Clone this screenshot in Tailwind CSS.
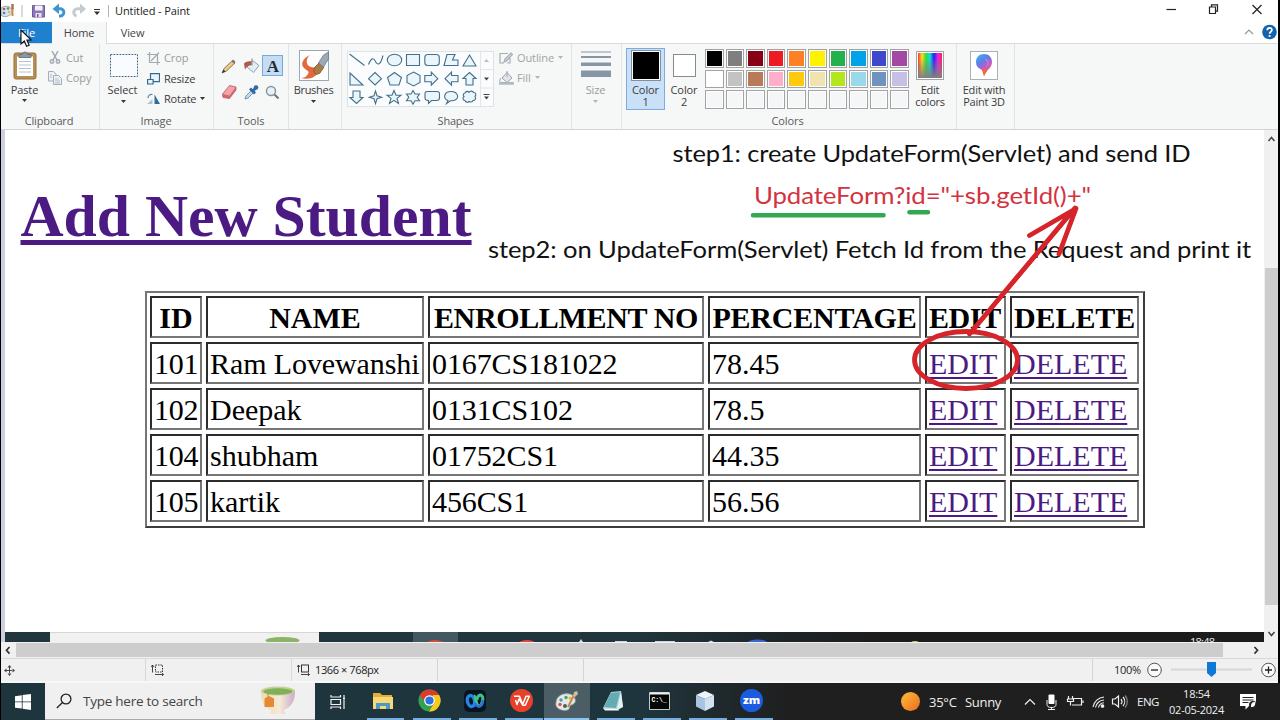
<!DOCTYPE html>
<html lang="en">
<head>
<meta charset="utf-8">
<title>Untitled - Paint</title>
<script src="https://cdn.jsdelivr.net/npm/@tailwindcss/browser@4"></script>
</head>
<body class="w-[1280px] h-[720px] overflow-hidden bg-black">
<div class="w-[1280px] h-[720px] flex flex-col overflow-hidden font-['Open_Sans','Noto_Sans',sans-serif] text-[11px] leading-3 tracking-[-0.1px] text-[#3c3c3c] whitespace-nowrap">

  <!-- window -->
  <div class="h-[683px] pl-px pr-[2px] flex flex-col bg-black">
    <!-- title bar -->
    <header class="h-[22px] bg-white flex items-center">
      <svg class="w-[114px] h-[22px] shrink-0" viewBox="1 0 114 22">
        <path d="M1 8c4-3 10-2 11 2s-2 5-4 6-5 1-7-1z" fill="#d5e3ea" stroke="#8397a1" stroke-width=".8"/>
        <circle cx="4" cy="9" r="1.3" fill="#c7524a"/><circle cx="8" cy="8.500" r="1.300" fill="#5b9c4e"/><circle cx="4" cy="13" r="1.300" fill="#4b7dc0"/><circle cx="9" cy="12" r="1.200" fill="#e5b84b"/>
        <path d="M12.500 16V8" stroke="#d28b49" stroke-width="2"/><path d="M12.500 9V4" stroke="#a9705a" stroke-width="2.500"/>
        <path d="M22 5v12M108.500 5v12" stroke="#b5b5b5"/>
        <path d="M32.500 5.500h12v11.500h-12z" fill="#8e76b8" stroke="#6e5a9a"/><path d="M35 5.500h7.500v5H35z" fill="#f5f1fa"/><path d="M35.500 13h6v4h-6z" fill="#e9e3f2"/><path d="M37 14h1.500v3H37z" fill="#6e5a9a"/>
        <path d="M56 8.800h4a3.600 3.600 0 0 1 .5 7.200h-1.500" fill="none" stroke="#3d95cf" stroke-width="2.900"/><path d="M52.500 9l6.500-5.500v10.500z" fill="#3d95cf"/>
        <path d="M82 8.800h-3.500a3.600 3.600 0 0 0-2 7.200" fill="none" stroke="#c3cbd1" stroke-width="2.900"/><path d="M86 9l-6-5.500v10.500z" fill="#c3cbd1"/>
        <path d="M94 9.500h6" stroke="#333"/><path d="M94 11.500h6l-3 3.500z" fill="#333"/>
      </svg>
      <h1 class="text-[#222]">Untitled - Paint</h1>
      <svg class="ml-auto w-[120px] h-[22px]" viewBox="1158 0 120 22" fill="none" stroke="#222" stroke-width="1.200">
        <path d="M1166.500 9.500h9.500"/><path d="M1209.500 7h6v6.500h-6zM1211.500 7V4.800h6v6.400h-2"/><path d="M1252.500 5l9 9M1261.500 5l-9 9"/>
      </svg>
    </header>

    <!-- ribbon tabs -->
    <nav class="h-[22px] bg-white flex border-b border-[#dadbdc] text-[#444]">
      <div class="relative w-[51px] h-[21px] bg-[#1f80d0] text-white flex items-center justify-center">File
        <svg class="absolute left-[18px] top-[7px] w-4 h-5 z-10" viewBox="0 0 16 20"><path d="M2 1v14l3.300-3 2.300 5.300 2.600-1.100-2.300-5.200h4.300z" fill="#fff" stroke="#111" stroke-width="1.100"/></svg>
      </div>
      <div class="w-[55px] h-[22px] bg-[#f6f7f7] border-r border-[#dadbdc] flex items-center justify-center pb-px">Home</div>
      <div class="w-[51px] flex items-center justify-center">View</div>
      <svg class="ml-auto w-[40px] h-[21px]" viewBox="1238 22 40 21"><path d="M1245 34l4-4 4 4" fill="none" stroke="#999" stroke-width="1.200"/><circle cx="1269.500" cy="32" r="7.300" fill="#1463ae"/><path d="M1267.300 30.300c0-3.300 4.700-3 4.600-.3 0 1.700-2.300 1.800-2.300 3.800" fill="none" stroke="#fff" stroke-width="1.700"/><circle cx="1269.600" cy="36" r="1.100" fill="#fff"/></svg>
    </nav>

    <!-- ribbon -->
    <section class="h-[86px] bg-[#f6f7f7] border-b border-[#d2d3d4] flex">
      <!-- Clipboard -->
      <div class="w-[99px] border-r border-[#e2e3e4] flex flex-col">
        <div class="h-[71px] flex">
          <div class="w-[47px] flex flex-col items-center pt-[5px]">
            <svg class="w-[26px] h-[32px]" viewBox="0 0 26 32"><rect x="2" y="4" width="22" height="26" rx="2" fill="#b98e55" stroke="#94703f"/><path d="M5 7.500h16V27H5z" fill="#fff"/><path d="M7 12.500h12M7 16h12M7 19.500h12M7 23h12" stroke="#b4c3d3"/><path d="M7 8.500V5.500h3.500a2.500 2.500 0 0 1 5 0H19v3z" fill="#8d98a3" stroke="#5c6873" stroke-width=".8"/></svg>
            <span class="mt-[3px]">Paste</span>
            <svg class="mt-[3px] w-[5px] h-[4px]" viewBox="0 0 5 4"><path d="M0 0h5L2.500 3z" fill="#333"/></svg>
          </div>
          <div class="flex flex-col gap-[7px] pt-[7px] text-[#9b9b9b]">
            <div class="flex items-center gap-[4px]"><svg class="w-[14px] h-[13px]" viewBox="0 0 14 13" fill="none" stroke="#a3a9b1" stroke-width="1.500"><path d="M4 0l5 9M10 0L5 9"/><circle cx="4" cy="10.500" r="1.700"/><circle cx="10" cy="10.500" r="1.700"/></svg>Cut</div>
            <div class="flex items-center gap-[4px]"><svg class="w-[14px] h-[14px]" viewBox="0 0 14 14" fill="#eef0f4" stroke="#a4adc0"><path d="M.5.500h5l2.500 2.500v7H.5z"/><path d="M5.500 4.500h5l3 3v6h-8z"/><path d="M7 8h3.500M7 10h5M7 12h5M2 4h2M2 6h2" stroke-width=".8"/></svg>Copy</div>
          </div>
        </div>
        <div class="text-center text-[#5a5a5a] pr-[2px] tracking-[-0.15px]">Clipboard</div>
      </div>
      <!-- Image -->
      <div class="w-[114px] border-r border-[#e2e3e4] flex flex-col">
        <div class="h-[71px] flex">
          <div class="w-[47px] flex flex-col items-center pt-[10px]">
            <svg class="w-[28px] h-[23px]" viewBox="0 0 28 23"><rect x=".5" y=".5" width="27" height="22" fill="#f8fcff" stroke="#42637e" stroke-dasharray="1.800 1.200"/></svg>
            <span class="mt-[7px] pr-[2px]">Select</span>
            <svg class="mt-[4px] w-[5px] h-[4px]" viewBox="0 0 5 4"><path d="M0 0h5L2.500 3z" fill="#333"/></svg>
          </div>
          <div class="flex flex-col gap-[8.500px] pt-[8px]">
            <div class="flex items-center gap-[4px] h-3 text-[#9b9b9b]"><svg class="w-[13px] h-[13px]" viewBox="0 0 13 13" fill="none" stroke="#a3a9b1" stroke-width="1.200"><path d="M2.500 0v10.500H13M0 2.500h10.500V13M4 9l8-8.500"/></svg>Crop</div>
            <div class="flex items-center gap-[4px] h-3 tracking-[-0.2px]"><svg class="w-[13px] h-[12px]" viewBox="0 0 13 12" fill="#e9f3fa" stroke="#356b91" stroke-width="1.200"><path d="M3.500.600h9v8h-9z"/><path d="M.6 6.500h5.500v4.500H.6z"/></svg>Resize</div>
            <div class="flex items-center gap-[4px] h-3 tracking-[-0.2px]"><svg class="w-[13px] h-[12px]" viewBox="0 0 13 12"><path d="M7.500 1.500v9.500H13z" fill="#2f6e9a"/><path d="M5.500 6v5H0z" fill="#a9c7da"/><path d="M1 5c0-2.500 2-4 4.500-3.500" fill="none" stroke="#4c86ad" stroke-width="1.200"/></svg>Rotate<svg class="w-[5px] h-[4px]" viewBox="0 0 5 4"><path d="M0 0h5L2.500 3z" fill="#333"/></svg></div>
          </div>
        </div>
        <div class="text-center text-[#5a5a5a] pr-px">Image</div>
      </div>
      <!-- Tools -->
      <div class="w-[75px] border-r border-[#e2e3e4] flex flex-col">
        <svg class="w-[74px] h-[71px]" viewBox="214 44 74 71">
          <path d="M222 73l2-4.500 8.500-8 2.500 2.500-8.500 8z" fill="#e9c98a" stroke="#7d6238" stroke-width=".8"/><path d="M222 73l1.500-3.500 2 2z" fill="#333"/><path d="M231.500 61.500l1.500-2 2.500 2.300-1.500 2z" fill="#8b6f77"/>
          <path d="M247 67l5.500-6.500 6.500 5-5.500 7z" fill="#e4eef6" stroke="#8599a8" stroke-width=".9"/><path d="M252 58.500v7" stroke="#72889a"/><path d="M251.500 61.500c-3-1-6.500.5-7.500 2l1 6.500c1-2.500 2-4 6.500-5z" fill="#b3574a"/>
          <rect x="262.500" y="55.500" width="20" height="20" fill="#c5ddf3" stroke="#79a9d9"/>
          <text x="272.800" y="71.500" text-anchor="middle" font-family="Liberation Serif, serif" font-weight="700" font-size="17" fill="#1f2d3a">A</text>
          <path d="M222.500 94l7-8.500 6.500 1.500v3l-6.500 8.500-6.500-1z" fill="#d9636e" stroke="#b3525c" stroke-width=".7"/><path d="M223 94l6.500-8 6 1.500-6 8z" fill="#f0a5a9"/>
          <path d="M245 99l1-3 6-6 2 2-6 6z" fill="#c5dff2" stroke="#5a7b98" stroke-width=".8"/><path d="M250 88.500l5 5M252.500 91.500l4-4.500" stroke="#2c6ba6" stroke-width="2.800"/><circle cx="256" cy="87.500" r="2.300" fill="#2c6ba6"/>
          <circle cx="271" cy="91" r="4.500" fill="#e6f2fa" stroke="#8a9298" stroke-width="1.400"/><path d="M274.500 94.500l4 4" stroke="#757575" stroke-width="2.200"/>
        </svg>
        <div class="text-center text-[#5a5a5a]">Tools</div>
      </div>
      <!-- Brushes -->
      <div class="w-[53px] border-r border-[#e2e3e4] flex flex-col items-center pt-[6px] pr-[3px]">
        <svg class="w-[30px] h-[31px]" viewBox="0 0 30 31"><rect x=".5" y=".5" width="29" height="30" fill="#fff" stroke="#9aa9b5"/><path d="M11 5C4 8 1 14 5 18c3 3 6 3 4 6-2 3-4 4-7 4 7 2 16 0 17-7 0-4-4-3-7-4-5-1-6-8-1-12z" fill="#e2673a"/><path d="M15 18l5-5 5 4-4 6c-4 3-7 0-6-5z" fill="#a87b47" stroke="#7c5630" stroke-width=".8"/><path d="M19.500 13l5-8 5-3v7l-5 8z" fill="#9caab5" stroke="#6d7c88" stroke-width=".8"/></svg>
        <span class="mt-[3px] tracking-[-0.3px]">Brushes</span>
        <svg class="mt-[4px] w-[5px] h-[4px]" viewBox="0 0 5 4"><path d="M0 0h5L2.500 3z" fill="#333"/></svg>
      </div>
      <!-- Shapes -->
      <div class="w-[230px] border-r border-[#e2e3e4] flex flex-col">
        <div class="h-[71px] flex pl-[5px] pt-[7px]">
          <svg class="w-[147px] h-[56px]" viewBox="347 51 147 56" fill="none" stroke="#44708a" stroke-width="1.100">
            <path d="M347.500 51.500h146v55h-146z" fill="#fbfcfd" stroke="#dde3e8"/><path d="M480.500 52v54M481 69.500h12M481 88h12" stroke="#e2e7eb"/>
            <path d="M349.500 54l15 11.500"/><path d="M368.500 64.500c3-7 5-7 7-3s5 4 7.500-6"/><ellipse cx="394.500" cy="60" rx="7.200" ry="5.800" fill="#eaf6fb"/><path d="M406.500 54.500h13v11h-13z" fill="#eaf6fb"/><rect x="424.800" y="54.500" width="14.500" height="11" rx="3" fill="#eaf6fb"/><path d="M447 54.500h8l-2.500 5.500h5.500v5.500h-14z" fill="#eaf6fb"/><path d="M469.500 55l6.500 11h-13z" fill="#eaf6fb"/>
            <path d="M350 73v12h13z" fill="#eaf6fb"/><path d="M375 72.500l6.500 6.200-6.500 6.200-6.500-6.200z" fill="#eaf6fb"/><path d="M394.500 72.500l7 5-2.500 7.500h-9l-2.500-7.500z" fill="#eaf6fb"/><path d="M413.500 72l6.500 3.500v7l-6.500 3.500-6.500-3.500v-7z" fill="#eaf6fb"/><path d="M424.800 75.500h6.500v-3.500l6.500 6.700-6.500 6.500v-3.500h-6.500z" fill="#eaf6fb"/><path d="M458 75.500h-6.500v-3.500l-6.500 6.700 6.500 6.500v-3.500h6.500z" fill="#eaf6fb"/><path d="M469.500 72.500l6.500 6h-3v6.500h-7v-6.500h-3z" fill="#eaf6fb"/>
            <path d="M353 91h7v6.500h3l-6.500 6-6.500-6h3z" fill="#eaf6fb"/><path d="M375.500 91l1.500 4.800 4.700 1.500-4.700 1.500-1.500 4.800-1.500-4.800-4.700-1.500 4.700-1.500z" fill="#eaf6fb"/><path d="M394 90.500l2 4.700h5l-4 3.200 1.500 5-4.500-3-4.500 3 1.500-5-4-3.200h5z" fill="#eaf6fb"/><path d="M413 90.500l2 3.500h4.500l-2.300 3.300 2.300 3.400H415l-2 3.500-2-3.500h-4.500l2.300-3.400-2.300-3.300h4.500z" fill="#eaf6fb"/><path d="M427.500 91.500h9c3 0 3 1 3 3v3.500c0 2-1 2.500-3 2.500h-5l-3 3v-3c-2.500 0-3.500-.5-3.500-2.500v-3.500c0-2 0-3 2.500-3z" fill="#eaf6fb"/><path d="M448 100.500c-5.500-2-4-9 3-9s9.500 7.500 2.500 9c-1 .3-2.500.3-3 .3l-4 2.700z" fill="#eaf6fb"/><path d="M465 93c1-2 3-2 4-.7 1-1.800 4-1.500 4.500.2 2.500 0 3 2.500 1.500 4 1.500 2 0 4-2 4-1 2-3 1.500-4 1-1.500 1.500-3.500.5-4-1-2.500 0-2.500-3-1-4-1.500-1.500-.5-3.500 1-3.500z" fill="#eaf6fb"/>
            <g stroke="none" fill="#444"><path d="M484 62h5l-2.500-3z" fill="#bbb"/><path d="M484 77.500h5l-2.500 3zM483.500 94h6v1h-6zM484 96.500h5l-2.500 3z"/></g>
          </svg>
          <div class="ml-[5px] pt-px flex flex-col gap-[8px] text-[#a2a2a2]">
            <div class="flex items-center gap-[4px] h-3"><svg class="w-[14px] h-[12px]" viewBox="0 0 14 12" fill="none" stroke="#a6adb5" stroke-width="1.200"><path d="M9 1.500H1v9.500h4M11 6v5H8"/><path d="M5 10l1-3L12 1l1.500 1.500-6 6.500z" fill="#d4d8dc"/></svg>Outline<svg class="w-[5px] h-[4px]" viewBox="0 0 5 4"><path d="M0 0h5L2.500 3z" fill="#b5b5b5"/></svg></div>
            <div class="flex items-center gap-[3px] h-3"><svg class="w-[15px] h-[14px]" viewBox="0 0 15 14" fill="#e1e4e9" stroke="#9da5b1"><path d="M3 7l5-5.500 5 5.500-5 4.500z"/><path d="M8 0v6" fill="none"/><path d="M2 7c-2 3-1.500 4 0 4.500h12" fill="none"/><path d="M0 12.500h15" stroke="#b3bac7" stroke-width="2.500"/></svg>Fill<svg class="ml-px w-[5px] h-[4px]" viewBox="0 0 5 4"><path d="M0 0h5L2.500 3z" fill="#b5b5b5"/></svg></div>
          </div>
        </div>
        <div class="text-center text-[#5a5a5a] pr-[2px] tracking-[-0.2px]">Shapes</div>
      </div>
      <!-- Size -->
      <div class="w-[50px] border-r border-[#e2e3e4] flex flex-col items-center pt-[7px] pr-[2px] text-[#9b9b9b]">
        <svg class="w-[30px] h-[27px]" viewBox="0 0 30 27" fill="#8796a7"><path d="M0 .5h30v1H0zM0 5h30v2H0zM0 11.500h30V15H0zM0 19.500h30V26H0z"/></svg>
        <span class="mt-[6px]">Size</span>
        <svg class="mt-[4px] w-[5px] h-[4px]" viewBox="0 0 5 4"><path d="M0 0h5L2.500 3z" fill="#b5b5b5"/></svg>
      </div>
      <!-- Colors -->
      <div class="w-[335px] border-r border-[#e2e3e4] flex flex-col">
        <div class="h-[71px] flex pl-[4px] pt-[4px] text-center">
          <div class="w-[39px] h-[62px] bg-[#c9e0f7] border border-[#79acdf] flex flex-col items-center pt-px">
            <div class="w-[30px] h-[31px] border border-[#7f8fa0] p-px bg-white"><div class="h-full bg-black"></div></div>
            <span class="mt-[3px]">Color<br>1</span>
          </div>
          <div class="w-[38px] flex flex-col items-center pt-[6px]">
            <div class="w-[23px] h-[23px] border border-[#8a8a8a] bg-white"></div>
            <span class="mt-[7px]">Color<br>2</span>
          </div>
          <div class="ml-[2px] mt-px w-[204px] h-[60px] grid grid-cols-10 grid-rows-3 gap-[2px] *:border *:border-[#a3a3a3] *:p-px *:bg-[#fdfdfd]">
            <i><b class="block h-full bg-black"></b></i><i><b class="block h-full bg-[#7f7f7f]"></b></i><i><b class="block h-full bg-[#880015]"></b></i><i><b class="block h-full bg-[#ed1c24]"></b></i><i><b class="block h-full bg-[#ff7f27]"></b></i><i><b class="block h-full bg-[#fff200]"></b></i><i><b class="block h-full bg-[#22b14c]"></b></i><i><b class="block h-full bg-[#00a2e8]"></b></i><i><b class="block h-full bg-[#3f48cc]"></b></i><i><b class="block h-full bg-[#a349a4]"></b></i>
            <i><b class="block h-full bg-white"></b></i><i><b class="block h-full bg-[#c3c3c3]"></b></i><i><b class="block h-full bg-[#b97a57]"></b></i><i><b class="block h-full bg-[#ffaec9]"></b></i><i><b class="block h-full bg-[#ffc90e]"></b></i><i><b class="block h-full bg-[#efe4b0]"></b></i><i><b class="block h-full bg-[#b5e61d]"></b></i><i><b class="block h-full bg-[#99d9ea]"></b></i><i><b class="block h-full bg-[#7092be]"></b></i><i><b class="block h-full bg-[#c8bfe7]"></b></i>
            <i><b class="block h-full bg-[#f5f6f7]"></b></i><i><b class="block h-full bg-[#f5f6f7]"></b></i><i><b class="block h-full bg-[#f5f6f7]"></b></i><i><b class="block h-full bg-[#f5f6f7]"></b></i><i><b class="block h-full bg-[#f5f6f7]"></b></i><i><b class="block h-full bg-[#f5f6f7]"></b></i><i><b class="block h-full bg-[#f5f6f7]"></b></i><i><b class="block h-full bg-[#f5f6f7]"></b></i><i><b class="block h-full bg-[#f5f6f7]"></b></i><i><b class="block h-full bg-[#f5f6f7]"></b></i>
          </div>
          <div class="ml-px w-[40px] flex flex-col items-center pt-[3px]">
            <div class="w-[28px] h-[29px] border border-[#a3a3a3] p-px bg-white"><div class="h-full bg-[linear-gradient(to_bottom,transparent_20%,#808080),linear-gradient(to_right,#f33,#fd2,#3d3,#1dd,#22e,#e2e,#f24)]"></div></div>
            <span class="mt-[4px] tracking-[-0.25px]">Edit<br>colors</span>
          </div>
        </div>
        <div class="text-center text-[#5a5a5a] pr-[3px]">Colors</div>
      </div>
      <!-- Paint 3D -->
      <div class="w-[58px] border-r border-[#e2e3e4] flex flex-col items-center pt-[7px] pr-[3px] text-center">
        <svg class="w-[28px] h-[29px]" viewBox="0 0 28 29"><defs><linearGradient id="drop" x1="0" y1="0" x2=".6" y2="1"><stop offset="0" stop-color="#31c3ec"/><stop offset=".4" stop-color="#5b7fe8"/><stop offset=".7" stop-color="#c45ac8"/><stop offset="1" stop-color="#f0643c"/></linearGradient></defs><rect x=".5" y=".5" width="27" height="28" fill="#fff" stroke="#a9b1b8"/><path d="M14 3c5 0 8 3.500 8 8 0 6-5 7-8 14-1-3 0-5-3-6.500S6 15 6 11c0-4.500 3-8 8-8z" fill="url(#drop)"/><path d="M15 8c3 1 4 4 2 7" stroke="#b07fe0" stroke-width="1.500" fill="none"/><path d="M12 19l3-1.500 2 2-3 5.500z" fill="#f0673c"/></svg>
        <span class="mt-[4px] tracking-[-0.2px]">Edit with<br>Paint 3D</span>
      </div>
    </section>

    <!-- workspace -->
    <div class="h-[512px] flex bg-[#f0f0f0]">
      <main class="relative w-[1263px] h-[512px] pl-[4px] bg-[#cdcfdf] overflow-hidden">
        <div class="h-full bg-white flex flex-col font-['Liberation_Serif',serif] tracking-normal text-black">
          <a class="ml-[15.500px] mt-[52px] h-[68px] leading-[68px] text-[59.700px] font-bold text-[#4b1b83] underline decoration-[5px] underline-offset-[3.500px] self-start">Add New Student</a>
          <div class="ml-[140px] mt-[41px] w-[1000px] h-[237px] border-2 border-t-[#767676] border-l-[#767676] border-r-[#3c3c3c] border-b-[#3c3c3c] px-[3px] pt-[3px] grid grid-cols-[52px_218px_276px_213px_81px_129px] auto-rows-[42px] gap-x-[4px] gap-y-[4px] content-start text-[30px] leading-[39.500px] *:border-2 *:border-t-[#2c2c2c] *:border-l-[#2c2c2c] *:border-b-[#767676] *:border-r-[#767676] *:px-[2px] *:[&>a]:text-[#4b1b83] *:[&>a]:underline *:[&>a]:decoration-2 *:[&>a]:underline-offset-[3px]">
            <div class="font-bold text-center">ID</div><div class="font-bold text-center">NAME</div><div class="font-bold text-center tracking-[-0.35px]">ENROLLMENT NO</div><div class="font-bold text-center tracking-[-0.2px]">PERCENTAGE</div><div class="font-bold tracking-[-0.4px]">EDIT</div><div class="font-bold tracking-[-0.1px]">DELETE</div>
            <div class="tracking-[-0.3px] text-center">101</div><div class="tracking-[-0.1px]">Ram Lovewanshi</div><div class="tracking-[-0.1px]">0167CS181022</div><div>78.45</div><div><a>EDIT</a></div><div><a>DELETE</a></div>
            <div class="tracking-[-0.3px] text-center">102</div><div>Deepak</div><div class="tracking-[-0.1px]">0131CS102</div><div>78.5</div><div><a>EDIT</a></div><div><a>DELETE</a></div>
            <div class="tracking-[-0.3px] text-center">104</div><div>shubham</div><div class="tracking-[-0.1px]">01752CS1</div><div>44.35</div><div><a>EDIT</a></div><div><a>DELETE</a></div>
            <div class="tracking-[-0.3px] text-center">105</div><div>kartik</div><div class="tracking-[-0.1px]">456CS1</div><div>56.56</div><div><a>EDIT</a></div><div><a>DELETE</a></div>
          </div>
          <!-- clipped taskbar inside the drawing -->
          <svg class="mt-auto w-[1259px] h-[10px]" viewBox="5 632 1259 10">
            <defs><linearGradient id="strip"><stop offset=".5" stop-color="#20353c"/><stop offset=".62" stop-color="#1d2427"/><stop offset=".7" stop-color="#1c1c1c"/></linearGradient></defs>
            <path d="M5 632h1259v10H5z" fill="url(#strip)"/><path d="M50 632h269v10H50z" fill="#f1f1f1"/><path d="M50 632h269" stroke="#bbb"/><path d="M413 632h45v10h-45z" fill="#44585f"/>
            <ellipse cx="282.500" cy="640.500" rx="17" ry="3.500" fill="#8cb366"/><ellipse cx="435" cy="643" rx="8" ry="3" fill="#d34a40"/><ellipse cx="527" cy="643" rx="8" ry="3" fill="#e2483d"/><path d="M579 642l2-3 2 3zM615 641h12v1h-12zM655 641h20v1h-20zM708 642l3-1.500 3 1.500z" fill="#cfd6da"/><ellipse cx="757.500" cy="643" rx="10" ry="3.500" fill="#3d65cf"/><ellipse cx="915" cy="643" rx="4" ry="2" fill="#d8c860"/>
            <text x="1190" y="645.500" font-family="Open Sans, sans-serif" font-size="11" fill="#eee" textLength="25">18:48</text>
          </svg>
        </div>
        <!-- annotations drawn on the canvas -->
        <svg class="absolute inset-0 w-[1263px] h-[512px]" viewBox="1 130 1263 512" font-family="Lato, sans-serif" font-size="23.700">
          <text x="672.500" y="161.500" textLength="518" lengthAdjust="spacingAndGlyphs" fill="#111">step1: create UpdateForm(Servlet) and send ID</text>
          <text x="754" y="203.500" textLength="337" lengthAdjust="spacingAndGlyphs" fill="#d3333f">UpdateForm?id="+sb.getId()+"</text>
          <text x="488" y="258" textLength="763" lengthAdjust="spacingAndGlyphs" fill="#111">step2: on UpdateForm(Servlet) Fetch Id from the Request and print it</text>
          <path d="M753 215.200h130.500M909.500 212.300h18.500" stroke="#32a852" stroke-width="4.600" stroke-linecap="round"/>
          <g fill="none" stroke="#d6242b" stroke-width="4.800" stroke-linecap="round" stroke-linejoin="round"><path d="M969.500 334L1075 208M1029.500 235.500L1076 208.500 1059 254"/><path d="M972 332l104-124" stroke-width="3"/><ellipse cx="966" cy="360" rx="51.500" ry="28.500"/></g>
        </svg>
      </main>
      <div class="w-[14px] h-[512px] bg-[#f0f0f0] flex flex-col items-center">
        <svg class="w-[14px] h-[17px]" viewBox="0 0 14 17"><path d="M4.500 11l3-3.500 3 3.500" fill="none" stroke="#444" stroke-width="1.500"/></svg>
        <div class="mt-[121px] w-[13px] h-[337px] bg-[#cdcdcd]"></div>
        <svg class="mt-auto w-[14px] h-[17px]" viewBox="0 0 14 17"><path d="M4.500 7l3 3.500 3-3.500" fill="none" stroke="#444" stroke-width="1.500"/></svg>
      </div>
    </div>
    <!-- horizontal scrollbar -->
    <div class="h-[16px] bg-[#f0f0f0] flex items-center">
      <svg class="w-[15px] h-[16px]" viewBox="0 0 15 16"><path d="M8.500 5l-3 3.300 3 3.300" fill="none" stroke="#333" stroke-width="1.700"/></svg>
      <div class="w-[1207px] h-[14px] bg-[#cdcdcd]"></div>
      <svg class="ml-[26px] w-[15px] h-[16px]" viewBox="0 0 15 16"><path d="M5.500 5l3 3.300-3 3.300" fill="none" stroke="#333" stroke-width="1.700"/></svg>
    </div>
    <!-- status bar -->
    <footer class="h-[25px] bg-[#f0f0f0] border-t border-[#d9d9d9] flex items-center text-[#222] border-b-2 border-b-[#f7f7f7]">
      <div class="w-[145px] h-[22px] border-r border-[#d4d9de] flex items-center pl-[3px]"><svg class="w-[11px] h-[11px]" viewBox="0 0 11 11" fill="#444"><path d="M5 2h1v7H5zM2 5h7v1H2zM5.500 0l2 2.500h-4zM5.500 11l2-2.500h-4zM0 5.500l2.500-2v4zM11 5.500l-2.500-2v4z"/></svg></div>
      <div class="w-[146px] h-[22px] border-r border-[#d4d9de] flex items-center pl-[5px]"><svg class="w-[13px] h-[12px]" viewBox="0 0 13 12" fill="none" stroke="#333"><rect x="4.500" y="1" width="7" height="7" stroke-dasharray="1.500 1"/><path d="M1.500 8.500V1M0 3l1.500-2L3 3M4 10.500h8.500M11 9l1.500 1.500L11 12" stroke-width=".9"/></svg></div>
      <div class="w-[146px] h-[22px] border-r border-[#d4d4d4] flex items-center pl-[5px] gap-[5px] tracking-[-0.4px]"><svg class="w-[13px] h-[12px]" viewBox="0 0 13 12" fill="none" stroke="#333"><rect x="4.500" y="1" width="7" height="7"/><path d="M1.500 8.500V1M0 3l1.500-2L3 3M4 10.500h8.500M11 9l1.500 1.500L11 12" stroke-width=".9"/></svg>1366 × 768px</div>
      <div class="w-[146px] h-[22px] border-r border-[#d4d4d4]"></div>
      <div class="w-[509px] h-[22px] border-r border-[#d4d4d4]"></div>
      <span class="ml-[21px] w-[32px] tracking-[-0.3px]">100%</span>
      <svg class="w-[132px] h-[22px]" viewBox="1146 660 132 22" fill="none" stroke="#555"><circle cx="1154.500" cy="671" r="6.800" fill="#fafafa"/><path d="M1151 671h7" stroke="#222" stroke-width="1.300"/><path d="M1171 670.500h81" stroke="#d6d6d6" stroke-width="2"/><path d="M1207 663h9v11l-4.500 4-4.500-4z" fill="#0f78d4" stroke="none"/><circle cx="1268.500" cy="671" r="6.800" fill="#fafafa"/><path d="M1265 671h7M1268.500 667.500v7" stroke="#222" stroke-width="1.300"/></svg>
    </footer>
  </div>

  <!-- Windows taskbar -->
  <div class="h-[37px] flex items-stretch bg-[linear-gradient(to_right,#1f353d_0,#1f353d_640px,#1f1f1f_790px)] text-[#f0f0f0]">
    <div class="w-[45px] border-l border-black flex items-center justify-center"><svg class="w-[16px] h-[16px]" viewBox="0 0 16 16" fill="#fff"><path d="M0 2.200l6.800-1v6.300H0zM7.600 1.100L16 0v7.500H7.600zM0 8.300h6.800v6.300L0 13.700zM7.600 8.300H16V16l-8.400-1.200z"/></svg></div>
    <div class="w-[270px] bg-[#f0f0f0] border-b border-[#aaa] flex items-center pl-[11px] text-[13.500px] text-[#444]">
      <svg class="w-[16px] h-[16px]" viewBox="0 0 16 16" fill="none" stroke="#222" stroke-width="1.300"><circle cx="10" cy="6" r="4.900"/><path d="M6.500 9.500L.8 15"/></svg>
      <span class="ml-[11px] tracking-[-0.250px]">Type here to search</span>
      <svg class="ml-auto mr-[19px] w-[36px] h-[30px]" viewBox="0 0 36 30"><defs><linearGradient id="cup"><stop stop-color="#f1dcaf"/><stop offset=".55" stop-color="#f4ead7"/><stop offset="1" stop-color="#cfa9cf"/></linearGradient></defs><path d="M1 5c0 11 3 17 10 19 0 2-1 2-1 4h15c0-2-1-2-1-4 7-3 11-8 11-19z" fill="url(#cup)"/><ellipse cx="18" cy="5" rx="17" ry="4.500" fill="#c9cf9b"/><ellipse cx="18" cy="5.500" rx="14.500" ry="3.200" fill="#7fb257"/><path d="M8 7v5" stroke="#bc8349"/><path d="M9 10l5 2.500V21H4.500v-8.500z" fill="#e48a36"/></svg>
    </div>
    <div class="w-[45px] flex items-center justify-center"><svg class="w-[16px] h-[16px]" viewBox="0 0 16 16" fill="none" stroke="#f2f2f2" stroke-width="1.200"><path d="M1 1v2h9.500V1M1 15v-2h9.500v2M1 5.500h9.500v5H1zM14 1v2.500M14 6v9"/><path d="M13 4.500h2" stroke-width="2"/></svg></div>
    <div class="flex *:w-[46px] *:flex *:items-center *:justify-center *:border-b-2 *:border-transparent">
      <div class="relative"><svg class="w-[22px] h-[20px]" viewBox="0 0 22 20"><path d="M1 2h7l2 2h10v13H1z" fill="#e8ad35"/><path d="M1 6h20v12H1z" fill="#f8d775"/><path d="M4 18v-6h14v6h-4v-3H8v3z" fill="#4b9ac5"/></svg><i class="absolute left-[7px] bottom-[-2px] w-[37px] h-[2px] bg-[#76aee0]"></i></div>
      <div class="relative"><svg class="w-[23px] h-[23px]" viewBox="0 0 24 24"><circle cx="12" cy="12" r="11.500" fill="#31a350"/><path d="M2 6.200A11.500 11.500 0 0 1 22 6.300H12L8 15z" fill="#e1392c"/><path d="M22 6.300A11.500 11.500 0 0 1 11.500 23.500L17 14.500 15.500 6.300z" fill="#fbc81d"/><circle cx="12" cy="12" r="5.600" fill="#fff"/><circle cx="12" cy="12" r="4.300" fill="#2d72e0"/></svg><i class="absolute left-[7px] bottom-[-2px] w-[38px] h-[2px] bg-[#76aee0]"></i></div>
      <div class="relative"><svg class="w-[22px] h-[22px]" viewBox="0 0 22 22"><rect width="22" height="22" rx="5" fill="#0a1420"/><ellipse cx="7" cy="11" rx="3.600" ry="5.500" fill="none" stroke="#2486e3" stroke-width="3.500" transform="rotate(-12 7 11)"/><path d="M10 6c2 0 2 10 5 10s5-8 3-10-5 0-5 4" fill="none" stroke="#3cc38b" stroke-width="3"/><path d="M11 13c1 3 3 4 5 3s3-4 3-6" fill="none" stroke="#2a6fe0" stroke-width="2.500"/></svg><i class="absolute left-[7px] bottom-[-2px] w-[38px] h-[2px] bg-[#76aee0]"></i></div>
      <div class="relative"><svg class="w-[23px] h-[23px]" viewBox="0 0 23 23"><circle cx="11.500" cy="11.500" r="11.500" fill="#e8412a"/><path d="M4 7.200h5.500l3.200 8.300 3.300-8.300h3.300l-4 9h-2.500L9 10l-2 5.500h0L5.500 11" fill="none" stroke="#fff" stroke-width="1.500" stroke-linejoin="round"/></svg><i class="absolute left-[7px] bottom-[-2px] w-[38px] h-[2px] bg-[#76aee0]"></i></div>
      <div class="relative bg-[#4c5e65]"><svg class="w-[24px] h-[22px]" viewBox="0 0 24 22"><path d="M2 9c3-6 14-7 17-2s0 7-3 8 0 4-4 5-12-1-11-7z" fill="#e5e9e4" stroke="#aab9bc" stroke-width=".8"/><circle cx="6" cy="10" r="1.700" fill="#4f96c2"/><circle cx="11" cy="7.500" r="1.700" fill="#4aa457"/><circle cx="5" cy="14.500" r="1.700" fill="#d9513e"/><circle cx="15" cy="8" r="1.500" fill="#e0b33f"/><circle cx="10" cy="16" r="2" fill="#4c5e65"/><path d="M13 17l6-12" stroke="#c98842" stroke-width="2"/><path d="M18 6l1-4 3-1 1 3-3 3z" fill="#d8b79a"/></svg><i class="absolute left-0 bottom-[-2px] w-[45px] h-[2px] bg-[#8cc4f5]"></i></div>
      <div class="relative"><svg class="w-[22px] h-[22px]" viewBox="0 0 22 22"><path d="M9 2l10-1 2 16-5 3L1 18z" fill="#a9d7da"/><path d="M9 3l9-1-4 16-12-1z" fill="#64abb5"/><path d="M15 19l6-2-2-15z" fill="#e9eeee"/><path d="M1 18l15 1 1 1.500H3z" fill="#f7f7f7"/></svg><i class="absolute left-[7px] bottom-[-2px] w-[38px] h-[2px] bg-[#76aee0]"></i></div>
      <div class="relative"><svg class="w-[21px] h-[18px]" viewBox="0 0 21 18"><path d="M.5.500h20v17H.5z" fill="#060606" stroke="#c3cacc"/><path d="M1 1.500h19" stroke="#eee" stroke-width="2"/><text x="2.500" y="9.500" font-family="Liberation Mono, monospace" font-size="6.500" font-weight="700" fill="#fff">C:\_</text></svg><i class="absolute left-[7px] bottom-[-2px] w-[38px] h-[2px] bg-[#76aee0]"></i></div>
      <div class="relative"><svg class="w-[20px] h-[20px]" viewBox="0 0 20 20"><path d="M1 4l9-4 9 4-9 4z" fill="#edf4fb"/><path d="M1 4l9 4v12l-9-4.500z" fill="#a9c4e2"/><path d="M19 4l-9 4v12l9-4.500z" fill="#d3e1f0"/></svg><i class="absolute left-[7px] bottom-[-2px] w-[38px] h-[2px] bg-[#76aee0]"></i></div>
      <div class="relative"><svg class="w-[23px] h-[23px]" viewBox="0 0 23 23"><circle cx="11.500" cy="11.500" r="11.500" fill="#1c5be0"/><text x="11.500" y="15" text-anchor="middle" font-family="Open Sans, sans-serif" font-weight="800" font-size="11" textLength="17" lengthAdjust="spacingAndGlyphs" fill="#fff">zm</text></svg><i class="absolute left-[7px] bottom-[-2px] w-[38px] h-[2px] bg-[#76aee0]"></i></div>
    </div>
    <div class="ml-auto flex items-center text-[13px]">
      <div class="w-[19px] h-[19px] rounded-full bg-linear-to-br from-[#fdbb3c] to-[#ea6a1c]"></div>
      <span class="ml-[9px] w-[36px] tracking-[-0.25px]">35°C</span><span class="w-[56px] tracking-[-0.3px]">Sunny</span>
      <svg class="w-[110px] h-[37px] ml-px" viewBox="1022 683 110 37" fill="none" stroke="#f0f0f0" stroke-width="1.200">
        <path d="M1025 704.500l5-5 5 5"/><rect x="1048.500" y="694.500" width="6" height="9.500" rx="1" fill="#fff" stroke="none"/><path d="M1047 700v4.500a4.500 3 0 0 0 9 0V700M1051.500 707v2.500M1048 709.500h7" stroke-width="1"/>
        <path d="M1072 698.500h9.500v6.500h-9.500M1083 700.500v2.500M1068.500 696v2.500M1072.500 696v2.500M1067.500 699h6v2.500h-6zM1070.500 702v3.500"/>
        <g stroke-width="1.100"><path d="M1093 707a12 12 0 0 1 11-10M1095.500 707.500a9 9 0 0 1 8.500-7.500M1098.500 707.500a6 6 0 0 1 5.500-4.700"/><circle cx="1102.500" cy="706" r="1.300" fill="#fff"/></g>
        <path d="M1112.500 699h2.500l3.500-3v11l-3.500-3h-2.500zM1121 699a4 4 0 0 1 0 5M1123 697a7 7 0 0 1 0 9" /><path d="M1125 695.500a9 9 0 0 1 0 12" stroke="#888"/>
      </svg>
      <span class="ml-[5px] w-[32px] text-[11.500px] tracking-[-0.5px]">ENG</span>
      <div class="w-[55px] flex flex-col items-center gap-[4px] text-[11px] tracking-[-0.25px]"><span>18:54</span><span>02-05-2024</span></div>
      <svg class="ml-[16px] mr-[23px] w-[17px] h-[16px]" viewBox="0 0 17 16"><path d="M0 0h16v12H9l-3.500 3.500V12H0z" fill="#fff"/><path d="M2.500 3.500h11M2.500 6h11M2.500 8.500h6" stroke="#222"/><circle cx="13" cy="11" r="4" fill="#222"/><path d="M11 13c0-4 1-5 4.500-5-.5 4-1 5-4.500 5z" fill="#fff"/></svg>
    </div>
  </div>
</div>
</body>
</html>
